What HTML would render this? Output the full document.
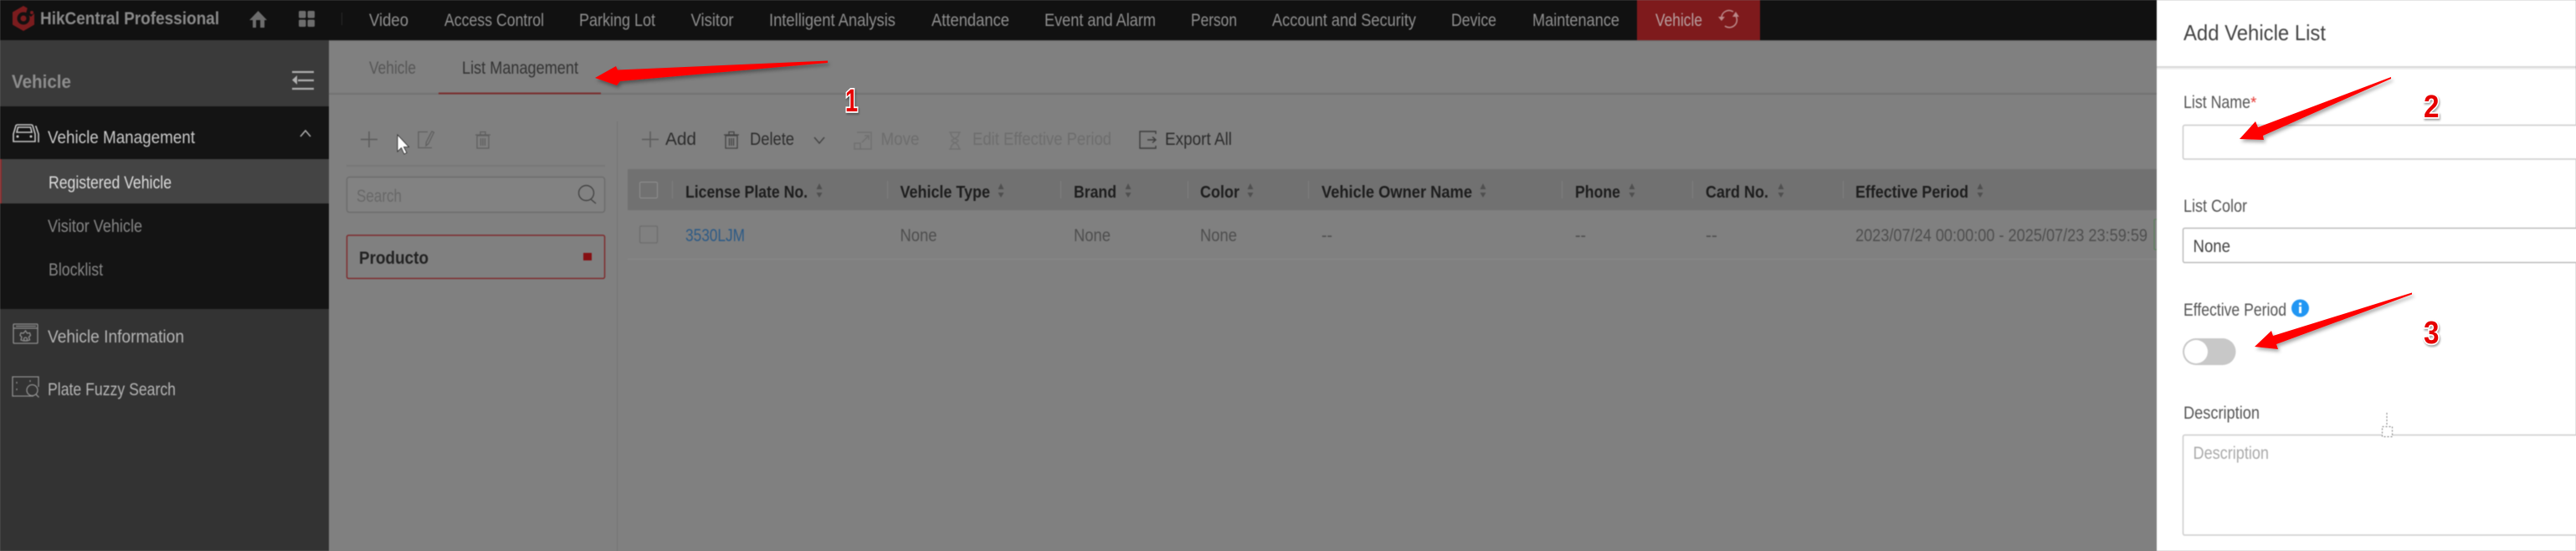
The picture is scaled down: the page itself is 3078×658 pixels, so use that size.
<!DOCTYPE html>
<html><head><meta charset="utf-8"><title>Add Vehicle List</title>
<style>
html,body{margin:0;padding:0;width:3078px;height:658px;overflow:hidden;background:#808080}
svg{display:block}
text{font-family:"Liberation Sans",sans-serif;font-size:21px}
.b{font-weight:bold}
.blur{filter:blur(.45px)}
.n{fill:#8f8f8f}
.h{fill:#1d1d1d;font-weight:bold;}
.h text{font-size:20.500px}
.d{fill:#4e4e4e}
.s{fill:#626262}
.l{fill:#555}
.ic{fill:none;stroke:#5f5f5f;stroke-width:1.300}
.num{font-size:38px;font-weight:bold;fill:#e60000;stroke:#fff;stroke-width:3.500px;paint-order:stroke;filter:drop-shadow(1px 2px 1px rgba(0,0,0,.35))}
</style></head>
<body>
<svg xmlns="http://www.w3.org/2000/svg" width="3078" height="658" viewBox="0 0 3078 658">
<defs><filter id="sh" x="-10%" y="-30%" width="120%" height="170%"><feDropShadow dx="2" dy="3" stdDeviation="2" flood-color="#000" flood-opacity=".35"/></filter></defs>
<rect width="3078" height="658" fill="#808080"/>
<g class="blur">
<!-- top bar -->
<rect width="3078" height="48" fill="#111"/>
<rect y="48" width="2577" height="1" fill="#6a6a6a"/>
<path d="M28 7l13 7.500v15L28 37l-13-7.500v-15z" fill="#7b1c1e"/>
<circle cx="28" cy="22" r="7.500" fill="#141111"/><circle cx="28" cy="22" r="3.500" fill="#7b1c1e"/>
<path d="M33 9l9 6-5 5-6-4z" fill="#111"/><circle cx="38" cy="15" r="2" fill="#7b1c1e"/>
<text x="48" y="29" textLength="214" lengthAdjust="spacingAndGlyphs" class="b" fill="#8a8a8a">HikCentral Professional</text>
<path d="M308.500 13L319 24h-3v9h-5v-9h-5v9h-4v-9h-4z" fill="#6d6d6d" fill-rule="evenodd"/>
<rect x="357" y="13" width="8.500" height="8.500" rx="1.500" fill="#6d6d6d"/><rect x="367.500" y="13" width="8.500" height="8.500" rx="1.500" fill="#6d6d6d"/><rect x="357" y="23.500" width="8.500" height="8.500" rx="1.500" fill="#6d6d6d"/><rect x="367.500" y="23.500" width="8.500" height="8.500" rx="1.500" fill="#6d6d6d"/>
<rect x="408" y="15" width="1" height="15" fill="#2a2a2a"/>
<g class="n">
<text x="441" y="31" textLength="47" lengthAdjust="spacingAndGlyphs">Video</text>
<text x="531" y="31" textLength="119" lengthAdjust="spacingAndGlyphs">Access Control</text>
<text x="692" y="31" textLength="91" lengthAdjust="spacingAndGlyphs">Parking Lot</text>
<text x="825.500" y="31" textLength="51" lengthAdjust="spacingAndGlyphs">Visitor</text>
<text x="919" y="31" textLength="151" lengthAdjust="spacingAndGlyphs">Intelligent Analysis</text>
<text x="1113" y="31" textLength="93" lengthAdjust="spacingAndGlyphs">Attendance</text>
<text x="1248" y="31" textLength="133" lengthAdjust="spacingAndGlyphs">Event and Alarm</text>
<text x="1423" y="31" textLength="55" lengthAdjust="spacingAndGlyphs">Person</text>
<text x="1520" y="31" textLength="172" lengthAdjust="spacingAndGlyphs">Account and Security</text>
<text x="1734" y="31" textLength="54" lengthAdjust="spacingAndGlyphs">Device</text>
<text x="1831" y="31" textLength="104" lengthAdjust="spacingAndGlyphs">Maintenance</text>
</g>
<rect x="1956" width="147" height="48" fill="#7e1a1c"/>
<text x="1978" y="31" textLength="56" lengthAdjust="spacingAndGlyphs" fill="#b8a0a0">Vehicle</text>
<path d="M2057 21a9 9 0 0 1 14-7M2074 19a9 9 0 0 1-13 12" fill="none" stroke="#b88" stroke-width="1.600"/>
<path d="M2053 20h8l-4 5zM2070 20h8l-4-6z" fill="#b88"/>
<!-- sidebar -->
<rect y="48" width="393" height="610" fill="#333"/>
<rect y="48" width="393" height="79" fill="#3a3a3a"/>
<rect y="127" width="393" height="242" fill="#141414"/>
<rect y="190" width="393" height="53" fill="#444"/>
<rect y="190" width="2" height="53" fill="#8e2a2c"/>
<text x="14" y="105" textLength="71" lengthAdjust="spacingAndGlyphs" class="b" style="font-size:22px" fill="#8d8d8d">Vehicle</text>
<path d="M349 86h26M356 96h19M349 106h26" stroke="#b0b0b0" stroke-width="2.200" fill="none"/><path d="M355 90v11l-6-5.500z" fill="#b0b0b0"/>
<g fill="none" stroke="#c8c8c8" stroke-width="1.600">
<path d="M16 169v-9l3-10q.5-1 2-1h16q1.500 0 2 1l3 10v9H16z"/><path d="M20 158l1.500-6h15l1.500 6z"/><path d="M42 151h1l3 9v10"/>
</g>
<circle cx="21" cy="163" r="1.500" fill="#c8c8c8"/><circle cx="37" cy="163" r="1.500" fill="#c8c8c8"/>
<text x="57" y="171" textLength="176" lengthAdjust="spacingAndGlyphs" fill="#c8c8c8">Vehicle Management</text>
<path d="M359 163l6-7 6 7" fill="none" stroke="#aaa" stroke-width="1.600"/>
<text x="58" y="225" textLength="147" lengthAdjust="spacingAndGlyphs" fill="#dcdcdc">Registered Vehicle</text>
<text x="57" y="277" textLength="113" lengthAdjust="spacingAndGlyphs" fill="#868686">Visitor Vehicle</text>
<text x="58" y="329" textLength="65" lengthAdjust="spacingAndGlyphs" fill="#868686">Blocklist</text>
<g fill="none" stroke="#8f8f8f" stroke-width="1.300">
<rect x="16" y="387" width="29" height="23" rx="1"/><path d="M16 392h29M19 389.500h24" /><path d="M30.500 395l2 3 3-.5 1 3-2 2 1 3.500-3 1h-4.500l-3-1 1-3.500-2-2 1-3 3 .5z"/><circle cx="30.500" cy="405" r="2"/>
<path d="M40 473H15v-23h31v12"/><circle cx="38.500" cy="466" r="6.500"/><path d="M43 471l3.500 3.500"/><path d="M20 456v2M20 464v2M36 454v2"/>
</g>
<text x="57" y="409" textLength="163" lengthAdjust="spacingAndGlyphs" fill="#b4b4b4">Vehicle Information</text>
<text x="57" y="472" textLength="153" lengthAdjust="spacingAndGlyphs" fill="#b4b4b4">Plate Fuzzy Search</text>
<!-- tabs -->
<rect x="393" y="111" width="2184" height="2" fill="#727272"/>
<rect x="524" y="110.500" width="194" height="2" fill="#7a2d2d"/>
<text x="441" y="88" textLength="56" lengthAdjust="spacingAndGlyphs" fill="#565656">Vehicle</text>
<text x="552" y="88" textLength="139" lengthAdjust="spacingAndGlyphs" fill="#333">List Management</text>
<!-- left list -->
<rect x="737" y="145" width="1" height="513" fill="#747474"/>
<path d="M441 157v19M431 166.500h20" stroke="#5a5a5a" stroke-width="1.500"/>
<path class="ic" d="M516 176.500h-16v-19h11M518.500 158l-6.500 13.500-3 2.500.3-4.200 6.700-13z"/>
<path class="ic" d="M570 162h14v15h-14zM568 161h18M574 161v-3.500h6v3.500M574.500 165v9M577 165v9M579.500 165v9"/>
<rect x="414" y="197" width="309" height="2" fill="#777"/>
<rect x="414.500" y="211.500" width="308" height="42" rx="3" fill="#828282" stroke="#6c6c6c" stroke-width="1.500"/>
<text x="426" y="241" textLength="54" lengthAdjust="spacingAndGlyphs" fill="#686868">Search</text>
<circle cx="700.500" cy="230.500" r="9" fill="none" stroke="#444" stroke-width="1.400"/><path d="M706 238l6 5" stroke="#444" stroke-width="1.400"/>
<rect x="414.500" y="281" width="308" height="51.500" rx="2" fill="#808080" stroke="#7e2a2c" stroke-width="1.500"/>
<text x="429" y="315" textLength="83" lengthAdjust="spacingAndGlyphs" class="b" fill="#222">Producto</text>
<rect x="697" y="302" width="10" height="9" fill="#860f12"/>
<path d="M475 161v20l4.500-4.500 3.500 7.500 3-1.500-3.500-7h6z" fill="#fff" stroke="#222" stroke-width=".8"/>
<!-- toolbar -->
<path d="M777 157v19M767 166.500h20" stroke="#5a5a5a" stroke-width="1.500"/>
<text x="795" y="173" textLength="37" lengthAdjust="spacingAndGlyphs" fill="#2c2c2c">Add</text>
<path class="ic" d="M867 162h14v15h-14zM865 161h18M871 161v-3.500h6v3.500M871.500 165v9M874 165v9M876.500 165v9" style="stroke:#444"/>
<text x="896" y="173" textLength="53" lengthAdjust="spacingAndGlyphs" fill="#2c2c2c">Delete</text>
<path d="M973 164l6 7 6-7" fill="none" stroke="#444" stroke-width="1.500"/>
<g fill="none" stroke="#707070" stroke-width="1.500">
<path d="M1024 158h17v20h-13M1021 171h7v7h-7zM1030 170l8-8M1033 162h5v5"/>
<path d="M1134 158h14M1134 178h14M1136 158c0 8 9 8 9 10s-9 2-9 10M1146 158c0 8-9 8-9 10s9 2 9 10"/>
</g>
<text x="1052.500" y="173" textLength="46" lengthAdjust="spacingAndGlyphs" fill="#6d6d6d">Move</text>
<text x="1162" y="173" textLength="166" lengthAdjust="spacingAndGlyphs" fill="#6d6d6d">Edit Effective Period</text>
<path d="M1381 160v-3h-19v20h19v-3M1371 167h10M1377 163.500l4 3.500-4 3.500" fill="none" stroke="#3c3c3c" stroke-width="1.400"/>
<text x="1392" y="173" textLength="80" lengthAdjust="spacingAndGlyphs" fill="#2c2c2c">Export All</text>
<!-- table -->
<rect x="750" y="202" width="1827" height="49" fill="#717171"/>
<rect x="750" y="309" width="1827" height="1" fill="#8a8a8a"/>
<rect x="764.500" y="217.500" width="21" height="19" rx="1.500" fill="none" stroke="#8c8c8c" stroke-width="1.200"/>
<rect x="764.500" y="270" width="21" height="20" rx="1.500" fill="none" stroke="#6c6c6c" stroke-width="1.200"/>
<g fill="#7e7e7e">
<rect x="803" y="216" width="1" height="21"/><rect x="1060" y="216" width="1" height="21"/><rect x="1267" y="216" width="1" height="21"/><rect x="1419" y="216" width="1" height="21"/><rect x="1563" y="216" width="1" height="21"/><rect x="1866" y="216" width="1" height="21"/><rect x="2022" y="216" width="1" height="21"/><rect x="2202" y="216" width="1" height="21"/>
</g>
<g class="h">
<text x="819" y="236" textLength="146" lengthAdjust="spacingAndGlyphs">License Plate No.</text>
<text x="1075.500" y="236" textLength="107.500" lengthAdjust="spacingAndGlyphs">Vehicle Type</text>
<text x="1283" y="236" textLength="51" lengthAdjust="spacingAndGlyphs">Brand</text>
<text x="1434" y="236" textLength="47" lengthAdjust="spacingAndGlyphs">Color</text>
<text x="1579" y="236" textLength="180" lengthAdjust="spacingAndGlyphs">Vehicle Owner Name</text>
<text x="1882" y="236" textLength="54" lengthAdjust="spacingAndGlyphs">Phone</text>
<text x="2038" y="236" textLength="75" lengthAdjust="spacingAndGlyphs">Card No.</text>
<text x="2217" y="236" textLength="135" lengthAdjust="spacingAndGlyphs">Effective Period</text>
</g>
<g fill="#4f4f4f">
<path d="M979 219l3.500 7h-7zM979 236l3.500-6h-7z"/><path d="M1196 219l3.500 7h-7zM1196 236l3.500-6h-7z"/><path d="M1348 219l3.500 7h-7zM1348 236l3.500-6h-7z"/><path d="M1494 219l3.500 7h-7zM1494 236l3.500-6h-7z"/><path d="M1772 219l3.500 7h-7zM1772 236l3.500-6h-7z"/><path d="M1950 219l3.500 7h-7zM1950 236l3.500-6h-7z"/><path d="M2128 219l3.500 7h-7zM2128 236l3.500-6h-7z"/><path d="M2366 219l3.500 7h-7zM2366 236l3.500-6h-7z"/>
</g>
<text x="819" y="288" textLength="71" lengthAdjust="spacingAndGlyphs" fill="#2c5a86">3530LJM</text>
<g class="d">
<text x="1075.500" y="288" textLength="44" lengthAdjust="spacingAndGlyphs">None</text>
<text x="1283" y="288" textLength="44" lengthAdjust="spacingAndGlyphs">None</text>
<text x="1434" y="288" textLength="44" lengthAdjust="spacingAndGlyphs">None</text>
<text x="1579" y="288" textLength="13" lengthAdjust="spacingAndGlyphs">--</text>
<text x="1882" y="288" textLength="13" lengthAdjust="spacingAndGlyphs">--</text>
<text x="2038" y="288" textLength="14" lengthAdjust="spacingAndGlyphs">--</text>
<text x="2217" y="288" textLength="349" lengthAdjust="spacingAndGlyphs">2023/07/24 00:00:00 - 2025/07/23 23:59:59</text>
</g>
<rect x="2574" y="262" width="4" height="36" rx="1" fill="none" stroke="#557f55" stroke-width="1"/>
<!-- panel -->
<rect x="2577" width="501" height="658" fill="#fff"/>
<rect x="2577" y="79" width="501" height="2" fill="#d8d8d8"/>
<rect x="2577" y="81" width="501" height="2" fill="#f2f2f2"/>
<text x="2609" y="48" textLength="170" lengthAdjust="spacingAndGlyphs" style="font-size:26px" fill="#444">Add Vehicle List</text>
<text x="2609" y="129" textLength="80" lengthAdjust="spacingAndGlyphs" class="l">List Name</text>
<text x="2689" y="129" style="font-size:19px" fill="#e53935">*</text>
<rect x="2608.500" y="149.500" width="500" height="40.500" rx="2" fill="#fff" stroke="#ccc" stroke-width="1.500"/>
<text x="2609" y="253" textLength="76" lengthAdjust="spacingAndGlyphs" class="l">List Color</text>
<rect x="2608.500" y="272.500" width="500" height="41" rx="2" fill="#fff" stroke="#bbb" stroke-width="1.500"/>
<text x="2620.500" y="301" textLength="44.500" lengthAdjust="spacingAndGlyphs" fill="#444">None</text>
<text x="2609" y="377" textLength="123" lengthAdjust="spacingAndGlyphs" class="l">Effective Period</text>
<circle cx="2748.500" cy="368" r="10.500" fill="#2196f3"/>
<rect x="2747" y="366" width="3" height="8" fill="#fff"/><rect x="2747" y="361.500" width="3" height="3" fill="#fff"/>
<rect x="2608" y="404" width="63.500" height="32" rx="16" fill="#c8c8c8"/>
<circle cx="2624" cy="420" r="14" fill="#fff"/>
<text x="2609" y="500" textLength="91" lengthAdjust="spacingAndGlyphs" class="l">Description</text>
<rect x="2608.500" y="519.500" width="500" height="119.500" rx="2" fill="#fff" stroke="#ccc" stroke-width="1.500"/>
<text x="2620.500" y="548" textLength="90.500" lengthAdjust="spacingAndGlyphs" fill="#aaa">Description</text>
<path d="M2852 493v16" stroke="#777" stroke-width="1" stroke-dasharray="2 2"/>
<rect x="2846.500" y="509.500" width="12" height="12" fill="#fff" stroke="#777" stroke-width="1" stroke-dasharray="2 2"/>
</g>
<!-- annotations -->
<g filter="url(#sh)" fill="#f00">
<polygon points="989,72.500 989,75 741,97 737,102 711,93 736,79 738,83.500"/>
<polygon points="2857,92 2857,94 2704,162 2705,167 2676,166 2695,145 2698,152"/>
<polygon points="2882,349.500 2882,351.500 2720,411 2722,417 2694,414 2714,395 2716,401"/>
</g>
<text class="num" x="1010" y="133" textLength="15" lengthAdjust="spacingAndGlyphs">1</text>
<text class="num" x="2896" y="140" textLength="18.500" lengthAdjust="spacingAndGlyphs">2</text>
<text class="num" x="2896" y="410" textLength="18.500" lengthAdjust="spacingAndGlyphs">3</text>
</svg>
</body></html>
